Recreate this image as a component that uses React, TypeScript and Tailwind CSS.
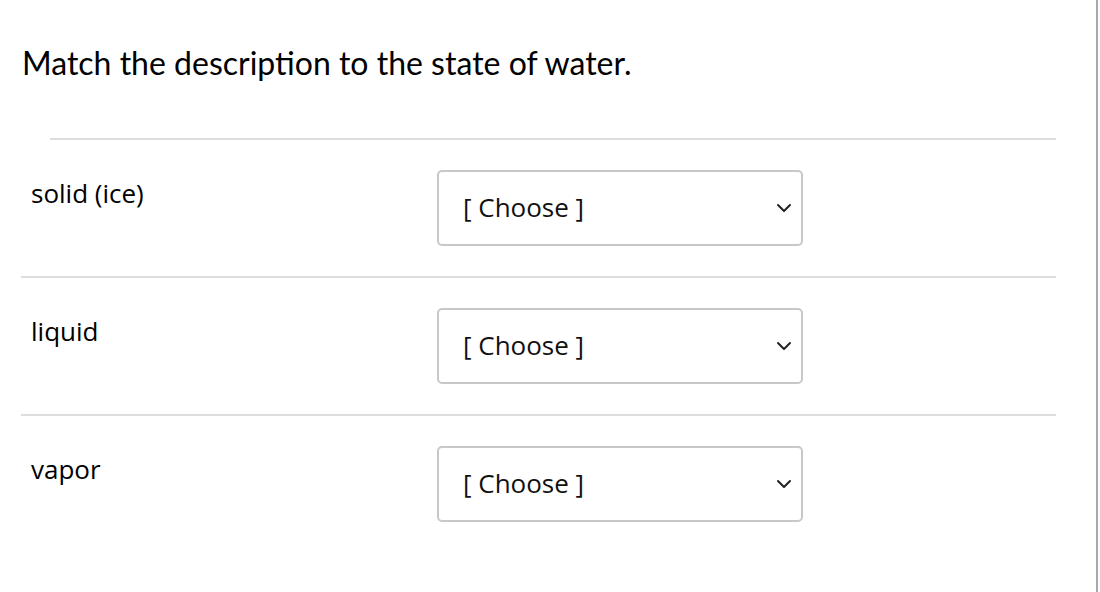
import React from 'react';

const rows = ['solid (ice)', 'liquid', 'vapor'];

function Chevron() {
  return (
    <svg width="16" height="10" viewBox="0 0 16 10" fill="none" className="shrink-0">
      <path d="M2 2 L8 8 L14 2" stroke="#222222" strokeWidth="2" strokeLinecap="round" strokeLinejoin="round" />
    </svg>
  );
}

function ChooseSelect() {
  return (
    <div className="mt-[30px] ml-[437px] flex h-[76px] w-[366px] items-center justify-between rounded-[5px] border-2 border-[#c8c8c8] bg-white pl-[24px] pr-[9px]">
      <span className="-mt-[2px] text-[26px] leading-[34px] text-[#111111]">[ Choose ]</span>
      <Chevron />
    </div>
  );
}

export default function App() {
  return (
    <div
      className="flex h-[592px] w-[1100px] overflow-hidden bg-white text-black"
      style={{ fontFamily: '"Open Sans", "Noto Sans", sans-serif' }}
    >
      <div className="w-[1096px]">
        <h1
          className="pl-[22px] pt-[43px] text-[32px] font-normal leading-[40px] text-black"
          style={{ fontFamily: 'Lato, "Open Sans", sans-serif' }}
        >
          Match the description to the state of water.
        </h1>

        <div className="mt-[55px] ml-[50px] h-[2px] w-[1006px] bg-[#dddddd]" />

        {rows.map((label, i) => (
          <div key={label}>
            {i > 0 && <div className="ml-[21px] h-[2px] w-[1035px] bg-[#dddddd]" />}
            <div className="relative flex h-[136px] items-start">
              <div className="absolute left-[31px] top-[37px] text-[26px] leading-[32px]">{label}</div>
              <ChooseSelect />
            </div>
          </div>
        ))}
      </div>
      <div className="h-full w-[2px] bg-[#a9a9a9]" />
    </div>
  );
}
